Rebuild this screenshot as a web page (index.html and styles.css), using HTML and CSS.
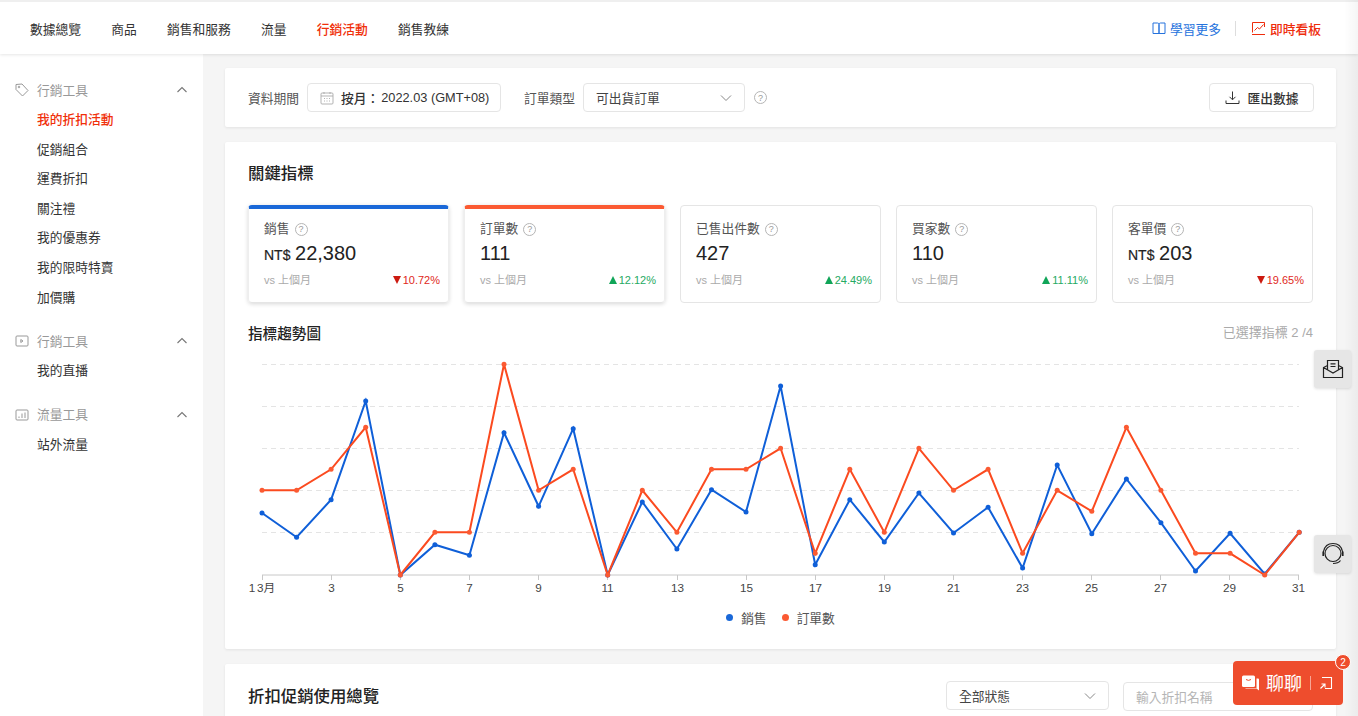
FILE: index.html
```html
<!DOCTYPE html>
<html lang="zh-Hant">
<head>
    <meta charset="UTF-8">
    <title>行銷活動</title>
    <link rel="stylesheet" href="styles.css">
</head>
<body>
    <header class="topbar">
        <nav class="tabs">
            <a href="#">數據總覽</a>
            <a href="#">商品</a>
            <a href="#">銷售和服務</a>
            <a href="#">流量</a>
            <a href="#" class="active">行銷活動</a>
            <a href="#">銷售教練</a>
        </nav>
        <div class="top-links">
            <a href="#" class="learn">
                <svg width="14" height="14" viewBox="0 0 14 14" fill="none" stroke="currentColor"><path d="M1 2h4.500a1.500 1.500 0 0 1 1.500 1.500V12.500H1zM13 2H8.500a1.500 1.500 0 0 0-1.500 1.500V12.500H13z"/></svg>
                學習更多
            </a>
            <span class="top-sep"></span>
            <a href="#" class="live">
                <svg width="15" height="15" viewBox="0 0 15 15" fill="none" stroke="currentColor"><path d="M13.500 6V1.500H1.500V11.500M3.500 9.500L6.500 6.500L8.500 8L12.500 3.500M1 13.500H14"/></svg>
                即時看板
            </a>
        </div>
    </header>

    <div class="layout">
        <aside class="sidebar">
            <div class="side-group">
                <div class="side-title">
                    <svg class="side-icon" width="14" height="14" viewBox="0 0 14 14" fill="none" stroke="#999"><path d="M1 1.500L7 1L13 7.500L7.500 13L1 6.500Z"/><circle cx="4" cy="4" r=".8"/></svg>
                    <span>行銷工具</span>
                    <svg class="chev" width="12" height="12" viewBox="0 0 12 12" fill="none" stroke="#777" stroke-width="1.100"><path d="M1.500 8L6 3.500L10.500 8"/></svg>
                </div>
                <a href="#" class="active">我的折扣活動</a>
                <a href="#">促銷組合</a>
                <a href="#">運費折扣</a>
                <a href="#">關注禮</a>
                <a href="#">我的優惠券</a>
                <a href="#">我的限時特賣</a>
                <a href="#">加價購</a>
            </div>
            <div class="side-group">
                <div class="side-title">
                    <svg class="side-icon" width="14" height="14" viewBox="0 0 14 14" fill="none" stroke="#999"><rect x="1" y="2" width="12" height="10" rx="1"/><path d="M5.800 5.500L8 7L5.800 8.500Z"/></svg>
                    <span>行銷工具</span>
                    <svg class="chev" width="12" height="12" viewBox="0 0 12 12" fill="none" stroke="#777" stroke-width="1.100"><path d="M1.500 8L6 3.500L10.500 8"/></svg>
                </div>
                <a href="#">我的直播</a>
            </div>
            <div class="side-group">
                <div class="side-title">
                    <svg class="side-icon" width="14" height="14" viewBox="0 0 14 14" fill="none" stroke="#999"><rect x="1" y="2" width="12" height="10" rx="1"/><path d="M4 10V8.500M7 10V5.500M10 10V4.500"/></svg>
                    <span>流量工具</span>
                    <svg class="chev" width="12" height="12" viewBox="0 0 12 12" fill="none" stroke="#777" stroke-width="1.100"><path d="M1.500 8L6 3.500L10.500 8"/></svg>
                </div>
                <a href="#">站外流量</a>
            </div>
        </aside>

        <main class="main">
            <section class="card filter-card">
                <span class="filter-label">資料期間</span>
                <div class="box period">
                    <svg class="cal" width="14" height="14" viewBox="0 0 14 14" fill="none" stroke="#aaa" stroke-width=".9"><rect x="1" y="2" width="12" height="11" rx="1"/><path d="M1 5H13M4 1V3M10 1V3M4 7.500h1M6.500 7.500h1M9 7.500h1M4 10h1M6.500 10h1M9 10h1"/></svg>
                    <b>按月：</b>
                    <span>2022.03 (GMT+08)</span>
                </div>
                <span class="filter-label type-label">訂單類型</span>
                <div class="box order-type">
                    <span>可出貨訂單</span>
                    <svg width="12" height="12" viewBox="0 0 12 12" fill="none" stroke="#888"><path d="M1 3.500L6 8.500L11 3.500"/></svg>
                </div>
                <span class="help big-help">?</span>
                <button class="export">
                    <svg width="15" height="15" viewBox="0 0 15 15" fill="none" stroke="#333"><path d="M7.500 1.500V9.500M4.500 6.800L7.500 9.800L10.500 6.800M1 10.500V13.500H14V10.500"/></svg>
                    匯出數據
                </button>
            </section>

            <section class="card metrics-card">
                <h2>關鍵指標</h2>
                <div class="metrics">
                    <div class="metric picked-blue">
                        <div class="metric-name">銷售 <span class="help">?</span></div>
                        <div class="metric-value"><small>NT$</small> 22,380</div>
                        <div class="metric-foot"><span>vs 上個月</span><span class="down">10.72%</span></div>
                    </div>
                    <div class="metric picked-orange">
                        <div class="metric-name">訂單數 <span class="help">?</span></div>
                        <div class="metric-value">111</div>
                        <div class="metric-foot"><span>vs 上個月</span><span class="up">12.12%</span></div>
                    </div>
                    <div class="metric">
                        <div class="metric-name">已售出件數 <span class="help">?</span></div>
                        <div class="metric-value">427</div>
                        <div class="metric-foot"><span>vs 上個月</span><span class="up">24.49%</span></div>
                    </div>
                    <div class="metric">
                        <div class="metric-name">買家數 <span class="help">?</span></div>
                        <div class="metric-value">110</div>
                        <div class="metric-foot"><span>vs 上個月</span><span class="up">11.11%</span></div>
                    </div>
                    <div class="metric">
                        <div class="metric-name">客單價 <span class="help">?</span></div>
                        <div class="metric-value"><small>NT$</small> 203</div>
                        <div class="metric-foot"><span>vs 上個月</span><span class="down">19.65%</span></div>
                    </div>
                </div>

                <div class="trend-head">
                    <h3>指標趨勢圖</h3>
                    <span class="trend-count">已選擇指標 2 /4</span>
                </div>

                <svg class="chart" width="1066" height="246" viewBox="248 352 1066 246">
                    <defs>
                        <marker id="dot-blue" markerUnits="userSpaceOnUse" markerWidth="6" markerHeight="6" refX="3" refY="3"><circle cx="3" cy="3" r="2.500" fill="#0f5fd8"/></marker>
                        <marker id="dot-orange" markerUnits="userSpaceOnUse" markerWidth="6" markerHeight="6" refX="3" refY="3"><circle cx="3" cy="3" r="2.500" fill="#fb5a32"/></marker>
                    </defs>
                    <g class="grid">
                        <line x1="262" x2="1299" y1="364.500" y2="364.500"/>
                        <line x1="262" x2="1299" y1="406.500" y2="406.500"/>
                        <line x1="262" x2="1299" y1="448.500" y2="448.500"/>
                        <line x1="262" x2="1299" y1="490.500" y2="490.500"/>
                        <line x1="262" x2="1299" y1="532.500" y2="532.500"/>
                    </g>
                    <path class="axis" d="M262 575H1299M262.500 575v5M331.500 575v5M400.500 575v5M469.500 575v5M538.500 575v5M607.500 575v5M677.500 575v5M746.500 575v5M815.500 575v5M884.500 575v5M953.500 575v5M1022.500 575v5M1091.500 575v5M1160.500 575v5M1229.500 575v5M1298.500 575v5"/>
                    <g class="ticks">
                        <text x="252" y="592">1</text><text x="266" y="592">3月</text>
                        <text x="331.500" y="592">3</text><text x="400.500" y="592">5</text><text x="469.500" y="592">7</text>
                        <text x="538.500" y="592">9</text><text x="607.500" y="592">11</text><text x="677.500" y="592">13</text>
                        <text x="746.500" y="592">15</text><text x="815.500" y="592">17</text><text x="884.500" y="592">19</text>
                        <text x="953.500" y="592">21</text><text x="1022.500" y="592">23</text><text x="1091.500" y="592">25</text>
                        <text x="1160.500" y="592">27</text><text x="1229.500" y="592">29</text><text x="1298.500" y="592">31</text>
                    </g>
                    <polyline class="line-blue" points="262,513 296.600,537.300 331.100,499.700 365.700,401 400.300,575 434.900,544.700 469.400,555.300 504,432.700 538.600,506.300 573.200,428.700 607.700,575 642.300,502 676.900,549 711.500,489.700 746,512 780.600,386 815.200,564.700 849.800,499.700 884.300,542 918.900,493 953.500,533 988.100,507.300 1022.600,568 1057.200,465 1091.800,533.700 1126.400,479 1160.900,522.700 1195.500,571 1230.100,533.300 1264.700,574 1299.200,532.300"/>
                    <polyline class="line-orange" points="262,490.300 296.600,490.300 331.100,469.300 365.700,427.300 400.300,575 434.900,532.300 469.400,532.300 504,364.300 538.600,490.300 573.200,469.300 607.700,575 642.300,490.300 676.900,532.300 711.500,469.300 746,469.300 780.600,448.300 815.200,553.300 849.800,469.300 884.300,532.300 918.900,448.300 953.500,490.300 988.100,469.300 1022.600,553.300 1057.200,490.300 1091.800,511.300 1126.400,427.300 1160.900,490.300 1195.500,553.300 1230.100,553.300 1264.700,575 1299.200,532.300"/>
                </svg>

                <div class="legend">
                    <span class="legend-item"><i class="legend-dot blue"></i>銷售</span>
                    <span class="legend-item"><i class="legend-dot orange"></i>訂單數</span>
                </div>
            </section>

            <section class="card usage-card">
                <h2>折扣促銷使用總覽</h2>
                <div class="usage-tools">
                    <div class="box status">
                        <span>全部狀態</span>
                        <svg width="12" height="12" viewBox="0 0 12 12" fill="none" stroke="#888"><path d="M1 3.500L6 8.500L11 3.500"/></svg>
                    </div>
                    <div class="box search">輸入折扣名稱</div>
                </div>
            </section>
        </main>
    </div>

    <div class="edge-shade"></div>

    <div class="float-btn mail">
        <svg width="22" height="20" viewBox="0 0 22 20" fill="none" stroke="#222" stroke-width="1.200"><path d="M5.500 6.500L1.500 8.500V18.500H20.500V8.500L16.500 6.500M1.500 8.500L11 14L20.500 8.500M5.500 10.500V1.500H16.500V10.500M8.500 4.800H13.500M8.500 7.500H13.500"/></svg>
    </div>
    <div class="float-btn support">
        <svg width="24" height="24" viewBox="0 0 24 24" fill="none" stroke="#222" stroke-width="1.200"><circle cx="12" cy="11.500" r="8"/><path d="M2.500 14V9.500C3.500 4.500 7 1.500 12 1.500S20.500 4.500 21.500 9.500V14M2 9.500V14M22 9.500V14M12 21.500C15 21.500 18 20.500 19.500 18.500"/></svg>
    </div>

    <div class="chat">
        <svg width="18" height="16" viewBox="0 0 18 16"><rect x="0" y="0.500" width="13" height="11.500" rx="1.500" fill="#fff"/><path d="M4 4.500q2.500 1.800 5 0" stroke="#ee4d2d" fill="none"/><path d="M14.500 3.500H16a1 1 0 0 1 1 1V15.500L14.500 13.500H3.500V13H14.500z" fill="#fff"/></svg>
        <span class="chat-text">聊聊</span>
        <span class="chat-sep"></span>
        <svg width="14" height="14" viewBox="0 0 14 14" fill="none" stroke="#fff" stroke-width="1.100"><path d="M3 1.500H12.500V12.500H6M1.500 12.500L5.500 8.500M2.500 8H6V11.500"/></svg>
        <span class="chat-badge">2</span>
    </div>
</body>
</html>
```

FILE: styles.css
```css
* {
    box-sizing: border-box;
}

html, body {
    height: 100%;
}

body {
    margin: 0;
    overflow: hidden;
    background: #f5f5f5;
    color: #333;
    font-family: "Liberation Sans", "Noto Sans CJK TC", sans-serif;
    font-size: 12.750px;
}

a {
    color: inherit;
    text-decoration: none;
}

.topbar {
    height: 54px;
    border-top: 2px solid #efefef;
    background: #fff;
    box-shadow: 0 1px 3px rgba(0, 0, 0, 0.1);
    display: flex;
    justify-content: space-between;
    align-items: center;
    padding: 0 37px 0 30px;
    position: relative;
}

.tabs {
    display: flex;
    gap: 30.250px;
}

.tabs .active {
    color: #f0300a;
    font-weight: 500;
}

.top-links {
    display: flex;
    align-items: center;
}

.top-links a {
    display: flex;
    align-items: center;
    gap: 4px;
}

.learn {
    color: #2673dd;
}

.live {
    color: #ee2c0c;
    font-weight: 500;
}

.top-sep {
    width: 1px;
    height: 15px;
    background: #ddd;
    margin: 0 15px 0 14px;
}

.layout {
    display: flex;
    height: 662px;
}

.sidebar {
    width: 203px;
    background: #fff;
    padding-top: 21px;
    flex-shrink: 0;
}

.side-group {
    margin-bottom: 14px;
}

.side-group a {
    display: block;
    height: 29.600px;
    line-height: 29.600px;
    padding-left: 37px;
}

.side-group a.active {
    color: #f0300a;
    font-weight: 500;
}

.side-title {
    height: 30px;
    display: flex;
    align-items: center;
    padding: 0 15px 0 15px;
    color: #999;
}

.side-title span {
    margin-bottom: 2px;
}

.side-icon {
    margin-right: 8px;
}

.chev {
    margin-left: auto;
}

.main {
    flex: 1;
    padding: 14px 22px 0;
    overflow: hidden;
}

.card {
    background: #fff;
    box-shadow: 0 1px 3px rgba(0, 0, 0, 0.08);
    border-radius: 2px;
    margin-bottom: 15px;
}

.filter-card {
    height: 59px;
    padding: 0 22px 0 23px;
    display: flex;
    align-items: center;
}

.filter-label {
    color: #555;
    margin-right: 8px;
    white-space: nowrap;
}

.type-label {
    margin-left: 23px;
}

.box {
    height: 29px;
    border: 1px solid #e5e5e5;
    border-radius: 4px;
    display: flex;
    align-items: center;
    background: #fff;
    white-space: nowrap;
}

.period {
    width: 194px;
    padding: 0 11px 0 12px;
    gap: 7px;
}

.cal {
    flex-shrink: 0;
}

.period b {
    font-weight: 500;
    margin-right: -5px;
}

.order-type {
    width: 162px;
    padding: 0 12px;
    justify-content: space-between;
    color: #444;
}

.help {
    display: inline-flex;
    justify-content: center;
    align-items: center;
    width: 13px;
    height: 13px;
    border: 1px solid #b5b5b5;
    border-radius: 50%;
    color: #999;
    font-size: 9px;
    vertical-align: 0;
    margin-left: 2px;
}

.big-help {
    margin-left: 9px;
}

.export {
    margin-left: auto;
    width: 105px;
    height: 29px;
    border: 1px solid #e5e5e5;
    border-radius: 4px;
    background: #fff;
    color: #333;
    font: inherit;
    font-weight: 500;
    display: flex;
    align-items: center;
    justify-content: center;
    gap: 8px;
    padding: 0;
}

.metrics-card {
    height: 507px;
    padding: 0 23px;
}

.metrics-card h2 {
    margin: 0;
    padding-top: 20px;
    height: 63px;
}

h2 {
    font-size: 16.400px;
    font-weight: 500;
    line-height: 22px;
    color: #222;
}

.metrics {
    display: flex;
    gap: 15px;
}

.metric {
    width: 201px;
    height: 98px;
    border: 1px solid #e5e5e5;
    border-radius: 4px;
    padding: 13px 8px 0 15px;
}

.picked-blue, .picked-orange {
    border-top: 4px solid #1a68d8;
    padding-top: 10px;
    box-shadow: 0 1px 4px rgba(0, 0, 0, 0.16);
    border-left-color: #eee;
    border-right-color: #eee;
}

.picked-orange {
    border-top-color: #fb5a32;
}

.metric-name {
    height: 20px;
    line-height: 20px;
    color: #555;
    display: flex;
    align-items: center;
    gap: 3px;
}

.metric-value {
    font-size: 20px;
    line-height: 26px;
    height: 27px;
    color: #222;
    margin-top: 1px;
}

.metric-value small {
    font-size: 14px;
    margin-right: -1px;
    -webkit-text-stroke: 0.2px #222;
}

.metric-foot {
    display: flex;
    justify-content: space-between;
    align-items: center;
    font-size: 11px;
    color: #aaa;
    margin-top: 4px;
}

.up, .down {
    display: flex;
    align-items: center;
    gap: 2px;
    margin-top: 1px;
}

.up {
    color: #26aa63;
}

.down {
    color: #e0281b;
}

.up::before, .down::before {
    content: "";
    border-left: 4px solid transparent;
    border-right: 4px solid transparent;
}

.up::before {
    border-bottom: 8px solid #10a558;
}

.down::before {
    border-top: 8px solid #cc1a10;
}

.trend-head {
    display: flex;
    justify-content: space-between;
    align-items: center;
    margin-top: 19px;
    height: 20px;
    color: #aaa;
}

.trend-head h3 {
    margin: 0;
    font-size: 14.600px;
    font-weight: 500;
    color: #222;
}

.trend-count {
    font-size: 13px;
    margin-bottom: 2px;
}

.chart {
    display: block;
    margin-top: 10px;
}

.grid line {
    stroke: #e4e4e4;
    stroke-dasharray: 5 4;
}

.axis {
    stroke: #c8c8c8;
    fill: none;
}

.ticks text {
    font-size: 11.700px;
    fill: #444;
    text-anchor: middle;
}

.line-blue, .line-orange {
    fill: none;
    stroke-width: 2;
    stroke-linejoin: miter;
}

.line-blue {
    stroke: #0f5fd8;
    marker-start: url(#dot-blue);
    marker-mid: url(#dot-blue);
    marker-end: url(#dot-blue);
}

.line-orange {
    stroke: #fb4a1f;
    marker-start: url(#dot-orange);
    marker-mid: url(#dot-orange);
    marker-end: url(#dot-orange);
}

.legend {
    display: flex;
    justify-content: center;
    gap: 15px;
    margin-top: 10px;
    color: #555;
}

.legend-item {
    display: flex;
    align-items: center;
    gap: 8px;
}

.legend-dot {
    width: 7px;
    height: 7px;
    border-radius: 50%;
}

.legend-dot.blue {
    background: #1a68d8;
}

.legend-dot.orange {
    background: #fb5a32;
}

.usage-card {
    height: 100px;
    padding: 17px 23px;
    display: flex;
    justify-content: space-between;
}

.usage-card h2 {
    margin: 4px 0 0;
}

.usage-tools {
    display: flex;
    gap: 14px;
    align-items: flex-start;
}

.status {
    width: 163px;
    padding: 0 12px;
    justify-content: space-between;
    color: #444;
}

.search {
    width: 190px;
    margin-top: 1px;
    padding: 0 12px;
    color: #b5b5b5;
}

/* the window edge is a little darker in the shot */
.edge-shade {
    position: absolute;
    top: 0;
    right: 0;
    width: 14px;
    height: 100%;
    background: linear-gradient(to right, rgba(0, 0, 0, 0), rgba(0, 0, 0, 0.04));
}

.float-btn {
    position: absolute;
    left: 1314px;
    width: 37px;
    height: 38px;
    background: #e6e6e6;
    border-radius: 3px;
    box-shadow: 0 1px 3px rgba(0, 0, 0, 0.12);
    display: flex;
    align-items: center;
    justify-content: center;
}

.mail {
    top: 350px;
}

.support {
    top: 535px;
}

.chat {
    position: absolute;
    left: 1233px;
    top: 661px;
    width: 110px;
    height: 44px;
    background: #ee4d2d;
    border-radius: 4px;
    color: #fff;
    display: flex;
    align-items: center;
    padding-left: 9px;
}

.chat-text {
    font-size: 18px;
    margin-left: 6px;
    margin-bottom: 2px;
}

.chat-sep {
    width: 1px;
    height: 14px;
    background: rgba(255, 255, 255, 0.5);
    margin: 0 8px;
}

.chat-badge {
    position: absolute;
    left: 102px;
    top: -7px;
    width: 16px;
    height: 16px;
    border-radius: 50%;
    background: #ee4d2d;
    border: 1px solid #fff;
    font-size: 10px;
    display: flex;
    align-items: center;
    justify-content: center;
}
```
